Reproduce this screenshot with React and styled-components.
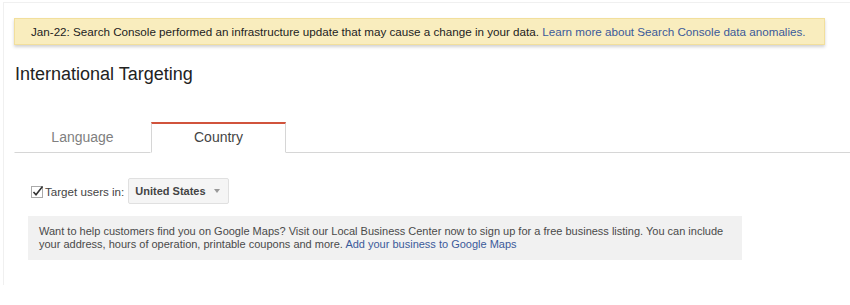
import React from 'react';
import styled, { createGlobalStyle } from 'styled-components';

const GlobalStyle = createGlobalStyle`
  html, body {
    margin: 0;
    padding: 0;
    background: #fff;
  }
  body {
    font-family: "Liberation Sans", Arial, sans-serif;
    color: #222;
  }
`;

const Frame = styled.div`
  margin: 2px 0 0 3px;
  height: 283px;
  border-top: 1px solid #f0f0f0;
  border-left: 1px solid #f0f0f0;
  box-sizing: border-box;
  padding: 15px 0 0 10px;
`;

const Notice = styled.div`
  width: 811px;
  height: 27px;
  box-sizing: border-box;
  display: flex;
  align-items: center;
  padding: 0 0 1px 16px;
  background: #f9edbe;
  border: 1px solid #f2df9c;
  box-shadow: 0 2px 3px rgba(0, 0, 0, 0.18);
  font-size: 11.65px;
  color: #222;
  white-space: nowrap;
`;

const Link = styled.a`
  color: #3b5a9a;
  text-decoration: none;
  cursor: pointer;
`;

const Title = styled.h1`
  margin: 18px 0 0 1px;
  font-size: 18px;
  font-weight: normal;
  line-height: 22px;
  color: #222;
`;

const TabBar = styled.div`
  display: flex;
  margin-top: 37px;
  height: 30px;
  border-bottom: 1px solid #d6d6d6;
`;

const Tab = styled.div`
  width: ${p => (p.$active ? '135px' : '137px')};
  box-sizing: border-box;
  display: flex;
  justify-content: center;
  padding-top: 5px;
  font-size: 14px;
  color: ${p => (p.$active ? '#444' : '#808080')};
  background: #fff;
  margin-bottom: -1px;
  border-top: 2px solid ${p => (p.$active ? '#d1533c' : 'transparent')};
  border-left: 1px solid ${p => (p.$active ? '#d6d6d6' : 'transparent')};
  border-right: 1px solid ${p => (p.$active ? '#d6d6d6' : 'transparent')};
  border-bottom: 1px solid ${p => (p.$active ? '#fff' : '#d6d6d6')};
`;

const TargetRow = styled.div`
  display: flex;
  align-items: center;
  margin: 25px 0 0 17px;
  font-size: 11.6px;
  color: #444;
`;

const CheckBox = styled.span`
  display: inline-flex;
  width: 13px;
  height: 13px;
  margin-right: 1px;
`;

const Label = styled.span`
  margin-right: 4px;
`;

const Select = styled.div`
  width: 101px;
  height: 26px;
  box-sizing: border-box;
  display: flex;
  align-items: center;
  justify-content: space-between;
  padding: 0 8px 0 6px;
  background: #f5f5f5;
  border: 1px solid #e0e0e0;
  border-radius: 2px;
  font-size: 11px;
  font-weight: bold;
  color: #444;
`;

const Caret = styled.span`
  width: 0;
  height: 0;
  border-left: 3px solid transparent;
  border-right: 3px solid transparent;
  border-top: 4px solid #999;
`;

const InfoBox = styled.div`
  width: 714px;
  box-sizing: border-box;
  margin: 12px 0 0 14px;
  padding: 9px 11px 9px 11px;
  background: #f1f1f1;
  font-size: 11px;
  line-height: 13px;
  color: #4a4a4a;
`;

const InfoLine = styled.div`
  white-space: nowrap;
`;

function Check() {
  return (
    <CheckBox>
      <svg width="13" height="13" viewBox="0 0 13 13">
        <rect x="0.5" y="1.5" width="11" height="11" fill="#fff" stroke="#aaa" />
        <path d="M2.5 7 L5 9.8 L11.5 1.5" fill="none" stroke="#333" strokeWidth="1.6" />
      </svg>
    </CheckBox>
  );
}

export default function App() {
  return (
    <>
      <GlobalStyle />
      <Frame>
        <Notice>
          Jan-22: Search Console performed an infrastructure update that may cause a change in your data.&nbsp;
          <Link>Learn more about Search Console data anomalies.</Link>
        </Notice>
        <Title>International Targeting</Title>
        <TabBar>
          <Tab>Language</Tab>
          <Tab $active>Country</Tab>
        </TabBar>
        <TargetRow>
          <Check />
          <Label>Target users in:</Label>
          <Select>
            United States
            <Caret />
          </Select>
        </TargetRow>
        <InfoBox>
          <InfoLine>
            Want to help customers find you on Google Maps? Visit our Local Business Center now to sign up for a free
            business listing. You can include
          </InfoLine>
          <InfoLine>
            your address, hours of operation, printable coupons and more.{' '}
            <Link>Add your business to Google Maps</Link>
          </InfoLine>
        </InfoBox>
      </Frame>
    </>
  );
}
